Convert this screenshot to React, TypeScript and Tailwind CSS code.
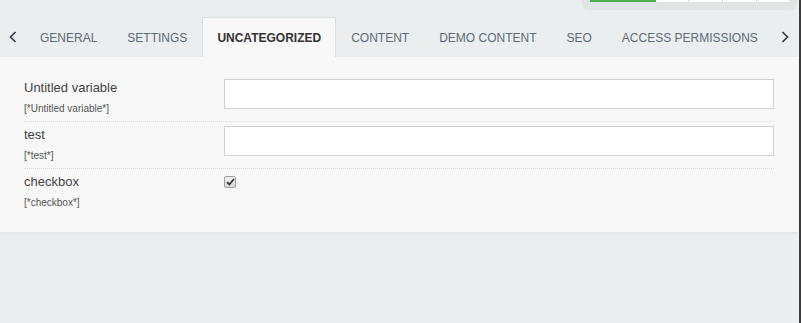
import { ReactNode } from 'react';

const tabs = ['GENERAL', 'SETTINGS', 'UNCATEGORIZED', 'CONTENT', 'DEMO CONTENT', 'SEO', 'ACCESS PERMISSIONS'];

const rows: { label: string; tag: string; kind: 'text' | 'check' }[] = [
  { label: 'Untitled variable', tag: '[*Untitled variable*]', kind: 'text' },
  { label: 'test', tag: '[*test*]', kind: 'text' },
  { label: 'checkbox', tag: '[*checkbox*]', kind: 'check' },
];

function Arrow({ dir }: { dir: 'left' | 'right' }) {
  return (
    <svg width="8" height="12" viewBox="0 0 8 12" className="block">
      <polyline
        points={dir === 'left' ? '6.5,1 1.5,6 6.5,11' : '1.5,1 6.5,6 1.5,11'}
        fill="none"
        stroke="#2f3640"
        strokeWidth="1.6"
      />
    </svg>
  );
}

function Field({ children, last }: { children: ReactNode; last?: boolean }) {
  return (
    <div className={`flex pt-1 pb-[5px] ${last ? '' : 'border-b border-dotted border-[#dcdcdc]'}`}>
      {children}
    </div>
  );
}

export default function App() {
  return (
    <div className="flex h-[323px] w-full bg-[#ebeeef] font-['Liberation_Sans',Arial,sans-serif]">
      <div className="flex min-w-0 flex-1 flex-col">
        {/* cut-off toolbar at the top */}
        <div className="flex h-[17px] justify-end pr-[1px]">
          <div className="h-[10px] w-[215px] rounded-b-[6px] bg-[#e1e4e5] px-2">
            <div className="flex h-[2px]">
              <div className="w-[66px] bg-[#4cae4c]" />
              <div className="w-[33px] border-r border-[#d4d7d8] bg-white" />
              <div className="w-[34px] border-r border-[#d4d7d8] bg-white" />
              <div className="w-[34px] border-r border-[#d4d7d8] bg-white" />
              <div className="w-[32px] bg-white" />
            </div>
          </div>
        </div>

        {/* tabs */}
        <div className="flex h-[41px] items-stretch overflow-hidden border-b border-[#dfe2e3]">
          <button type="button" className="flex w-[25px] shrink-0 items-center justify-center pl-[1px]">
            <Arrow dir="left" />
          </button>
          {tabs.map((tab) => {
            const active = tab === 'UNCATEGORIZED';
            return (
              <div
                key={tab}
                className={`flex shrink-0 items-center px-[14px] pt-[1px] text-[12px] whitespace-nowrap ${
                  active
                    ? 'border border-b-0 border-[#dcdfe0] bg-[#f8f8f8] font-bold text-[#333]'
                    : 'border border-transparent text-[#5f6b78]'
                }`}
              >
                {tab}
              </div>
            );
          })}
          <button type="button" className="flex w-[24px] shrink-0 items-center justify-center">
            <Arrow dir="right" />
          </button>
        </div>

        {/* panel */}
        <div className="-mt-px border-b-2 border-[#e3e6e7] bg-[#f8f8f8] px-6 pt-[18px] pb-[17px]">
          {rows.map((row, i) => (
            <Field key={row.label} last={i === rows.length - 1}>
              <div className="w-[200px] shrink-0">
                <div className="text-[13px] leading-[18px] text-[#444]">{row.label}</div>
                <div className="mt-[5px] text-[10px] leading-[14px] text-[#555]">{row.tag}</div>
              </div>
              <div className="min-w-0 flex-1">
                {row.kind === 'text' ? (
                  <input type="text" className="block h-[30px] w-full border border-[#d2d2d2] bg-white outline-none" />
                ) : (
                  <span className="mt-[3px] flex h-[12px] w-[12px] items-center justify-center rounded-[2px] border border-[#9e9e9e] bg-gradient-to-b from-[#f0f0f0] to-[#d8d8d8]">
                    <svg width="9" height="8" viewBox="0 0 9 8">
                      <polyline points="1,4.2 3.3,6.5 8,1" fill="none" stroke="#333" strokeWidth="1.8" />
                    </svg>
                  </span>
                )}
              </div>
            </Field>
          ))}
        </div>
      </div>
      <div className="w-[3px] shrink-0 border-l border-[#f4f4f4] bg-[#3a3a3a]" />
    </div>
  );
}
